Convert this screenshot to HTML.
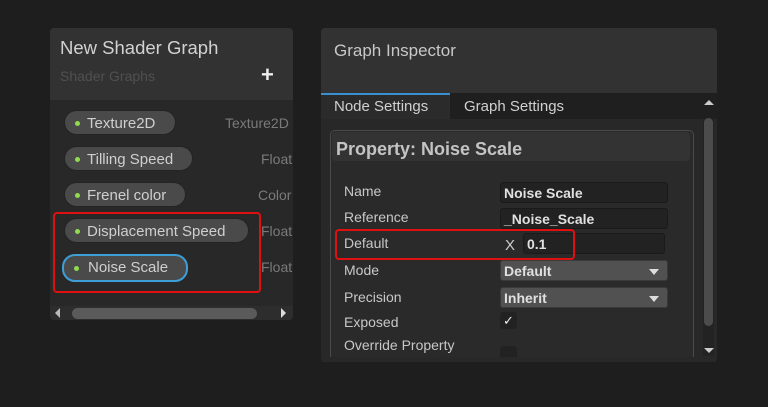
<!DOCTYPE html><html><head><style>
body{margin:0;width:768px;height:407px;background:#1e1e1e;font-family:"Liberation Sans",sans-serif;position:relative;overflow:hidden}
.a{position:absolute}
.pill{position:absolute;left:64px;height:25px;border-radius:13px;background:#4a4a4a;border:1px solid #242424;color:#cfcfcf;font-size:15px;line-height:25px;padding-left:22px;padding-right:12px;box-sizing:border-box}
.pill:before{content:"";position:absolute;left:10px;top:10px;width:5px;height:5px;border-radius:50%;background:#8fdc4e}
.ty{position:absolute;color:#7a7a7a;font-size:14px}
.lb{position:absolute;left:344px;color:#c8c8c8;font-size:14px}
.fd{position:absolute;left:500px;width:168px;height:21px;background:#222;border:1px solid #1a1a1a;border-radius:3px;color:#e0e0e0;font-size:14px;font-weight:bold;line-height:21px;padding-left:3px;box-sizing:border-box}
.dd{background:#515151;border-color:#3a3a3a}
.dd:after{content:"";position:absolute;right:8px;top:8px;border:5px solid transparent;border-top:6px solid #ddd;border-bottom:0}
</style></head><body>
<div class="a" style="left:50px;top:28px;width:243px;height:292px;background:#282828;border-radius:4px;overflow:hidden">
<div class="a" style="left:0;top:0;width:243px;height:72px;background:#323232"></div>
<div class="a" style="left:10px;top:9px;color:#d2d2d2;font-size:18.5px">New Shader Graph</div>
<div class="a" style="left:10px;top:40px;color:#505050;font-size:14px">Shader Graphs</div>
<div class="a" style="left:211px;top:34px;color:#eee;font-size:22px;font-weight:bold">+</div>
<div class="a" style="left:0;top:278px;width:243px;height:14px;background:#2d2d2d"></div>
<div class="a" style="left:22px;top:280px;width:185px;height:11px;border-radius:6px;background:#5a5a5a"></div>
<div class="a" style="left:5px;top:280px;border:5px solid transparent;border-right:5px solid #bbb;border-left:0"></div>
<div class="a" style="left:231px;top:280px;border:5px solid transparent;border-left:5px solid #ddd;border-right:0"></div>
</div>
<div class="pill" style="top:110px;width:112px">Texture2D</div>
<div class="pill" style="top:146px;width:129px">Tilling Speed</div>
<div class="pill" style="top:182px;width:122px">Frenel color</div>
<div class="pill" style="top:218px;width:185px">Displacement Speed</div>
<div class="pill" style="top:254px;border:2px solid #3d9fd6;left:62px;width:126px;height:28px;line-height:24px;padding-left:24px">Noise Scale</div>
<div class="ty" style="left:225px;top:115px">Texture2D</div>
<div class="ty" style="left:261px;top:151px">Float</div>
<div class="ty" style="left:258px;top:187px">Color</div>
<div class="ty" style="left:261px;top:223px">Float</div>
<div class="ty" style="left:261px;top:259px">Float</div>
<div class="a" style="left:53px;top:212px;width:204px;height:77px;border:2px solid #e01010;border-radius:4px"></div>

<div class="a" style="left:321px;top:28px;width:396px;height:334px;background:#282828;border-radius:4px;overflow:hidden">
<div class="a" style="left:0;top:0;width:396px;height:65px;background:#323232"></div>
<div class="a" style="left:13px;top:13px;color:#c8c8c8;font-size:17px">Graph Inspector</div>
<div class="a" style="left:0;top:65px;width:396px;height:26px;background:#1f1f1f"></div>
<div class="a" style="left:0;top:65px;width:129px;height:26px;background:#2b2b2b;border-top:2px solid #3a8fd0;box-sizing:border-box"></div>
<div class="a" style="left:13px;top:70px;color:#d0d0d0;font-size:15px">Node Settings</div>
<div class="a" style="left:143px;top:70px;color:#d0d0d0;font-size:15px">Graph Settings</div>
<div class="a" style="left:382px;top:90px;width:11px;height:238px;background:#232323"></div>
<div class="a" style="left:383px;top:90px;width:9px;height:208px;border-radius:5px;background:#4c4c4c"></div>
<div class="a" style="left:383px;top:72px;border:5px solid transparent;border-bottom:5px solid #ccc;border-top:0"></div>
<div class="a" style="left:383px;top:320px;border:5px solid transparent;border-top:5px solid #ccc;border-bottom:0"></div>
<div class="a" style="left:9px;top:102px;width:362px;height:240px;border:1px solid #4a4a4a;border-radius:5px;background:#2a2a2a"></div>
<div class="a" style="left:11px;top:104px;width:358px;height:29px;background:#333;border-radius:4px"></div>
<div class="a" style="left:15px;top:111px;color:#c4c4c4;font-size:18px;font-weight:bold">Property: Noise Scale</div>
</div>
<div class="lb" style="top:183px">Name</div>
<div class="lb" style="top:209px">Reference</div>
<div class="lb" style="top:235px">Default</div>
<div class="lb" style="top:262px">Mode</div>
<div class="lb" style="top:289px">Precision</div>
<div class="lb" style="top:314px">Exposed</div>
<div class="lb" style="top:337px;line-height:17px">Override Property<br>Declaration</div>
<div class="fd" style="top:182px">Noise Scale</div>
<div class="fd" style="top:208px">_Noise_Scale</div>
<div class="a" style="left:505px;top:237px;color:#ccc;font-size:15px">X</div>
<div class="fd" style="top:233px;left:523px;width:142px">0.1</div>
<div class="fd dd" style="top:260px">Default</div>
<div class="fd dd" style="top:287px">Inherit</div>
<div class="a" style="left:500px;top:312px;width:17px;height:17px;background:#222;border-radius:3px;color:#eee;font-size:13px;text-align:center;line-height:17px">✓</div>
<div class="a" style="left:500px;top:346px;width:17px;height:12px;background:#222;border-radius:3px 3px 0 0"></div>
<div class="a" style="left:322px;top:357px;width:394px;height:5px;background:#282828"></div>
<div class="a" style="left:321px;top:362px;width:400px;height:45px;background:#1e1e1e"></div>
<div class="a" style="left:335px;top:229px;width:236px;height:27px;border:2px solid #e01010;border-radius:4px"></div>
</body></html>
